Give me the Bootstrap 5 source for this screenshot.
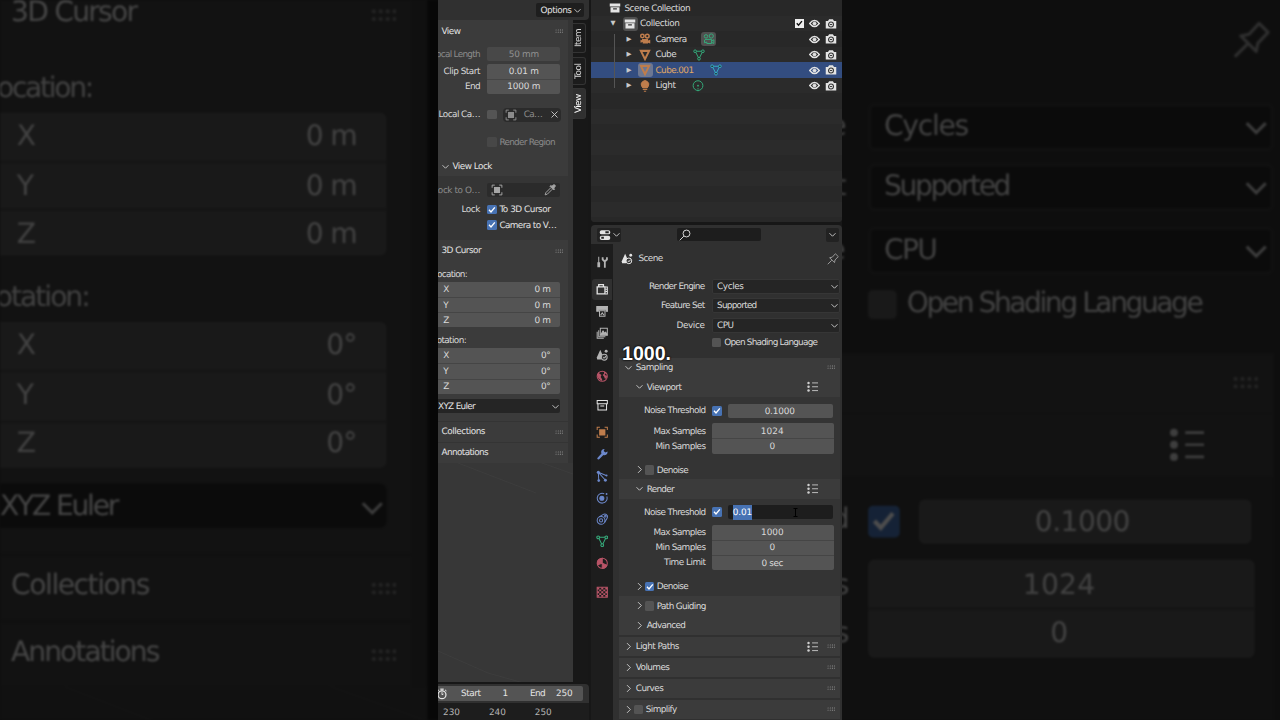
<!DOCTYPE html>
<html lang="en">
<head>
<meta charset="utf-8">
<meta name="viewport" content="width=device-width, initial-scale=1">
<title>Scene properties</title>
<link href="https://cdn.jsdelivr.net/npm/bootstrap@5.3.0/dist/css/bootstrap.min.css" rel="stylesheet">
<style>
html,body{height:100%;margin:0;background:#0e0e0e;overflow:hidden}
body{font-family:"DejaVu Sans",sans-serif;font-size:8.9px;line-height:1;color:#dadada;text-rendering:geometricPrecision}
.stage{width:1280px;height:720px}
.backdrop{inset:0;filter:blur(.9px) brightness(.3)}
.backdrop .phone{position:absolute;left:0;top:0;transform-origin:0 360px;transform:scale(3.1683)}
.phone{width:404px;height:720px;background:#171717;flex:none}
.front{z-index:1}
.t{display:inline-block;white-space:pre;line-height:14px;padding-top:1.3px}
.t,.i{flex:none}
.i{width:12px;height:12px;display:block;fill:none;stroke:currentColor;stroke-width:1.3}
.dim{color:#8b8b8b}
.h14{height:14px}.h15{height:15.25px}.h19{height:19.5px}
.s1{margin-top:1.5px}.s2{margin-top:2.5px}.s5{margin-top:5.5px}.s6{margin-top:6px}.s13{margin-top:13.5px}

/* left editor */
.leftcol{width:150.5px}
.v-head{height:19.5px;background:#303030;border-radius:0 0 4px 0;padding:3px 5px 0 0}
.opt{background:#1e1e1e;border-radius:2px;width:48px;height:14px;padding:0 2px 0 5px}
.side{width:135px;background:#343434}
.viewport-rest{background:#373737}
.pnl{width:129.5px;background:#3b3b3b}
.pnl-h{padding-left:3.5px}
.lock{background:#353535;width:129.5px;height:64px}
.lab{width:42px;flex:none}
.fld{background:#545454;border-radius:2px;width:73px;margin-left:7.3px;flex:none}
.fld.off{background:#484848;color:#929292}
.stk{width:73px;margin-left:7.3px;border-radius:2px;overflow:hidden;background:#545454}
.stk>div+div,.xyz>div+div,.f2>div+div{border-top:1px solid #454545}
.stk>div+div>.t,.xyz>div+div>.t,.f2>div+div>.t{margin-top:-.6px}
.darkf,.fld.darkf{background:#2b2b2b;color:#a5a5a5}
.darkf.dim{color:#8b8b8b}
.chk{width:9.6px;height:9.6px;background:#545454;border-radius:1.5px;flex:none}
.chk.on{background:#4772b3;color:#fff}
.chk .i{width:9.6px;height:9.6px;stroke-width:1.7}
.chk.ms-2{margin-left:7px!important}
.xyz{width:122px;background:#545454;border-radius:0 2px 2px 0;overflow:hidden}
.xyz>div{padding:0 9.5px 0 5.3px}
.euler{width:122px;background:#252525;border-radius:0 2px 2px 0}
.dots{width:8px;height:4px;flex:none;background:radial-gradient(circle at 1px 1px,#7c7c7c .55px,transparent .7px) 0 0/2.2px 2.4px;position:relative;left:-1px}
.tabsv{width:15px;background:#181818;padding-top:3px}
.vt{width:13px;border:1px solid #343434;border-right:0;writing-mode:vertical-rl;transform:rotate(180deg);border-radius:3px 0 0 3px;background:#1c1c1c}
.vt .t{line-height:11px;padding:0}
.vt.act{background:#303030;color:#fff}
.vi{height:30px}.vo{height:28px;margin-top:4px}.vw{height:31px;margin-top:3.5px}
#focal{margin-top:8px}
.camf{margin-left:6px;margin-right:7px;padding:0 2px}
.rtx{margin-left:2.8px}.rt2{margin-left:2.3px}
.vlk{margin-top:7.5px;padding-left:3px}.vlk .t{margin-left:2.5px}
.lk1{padding-top:6.5px;height:20.5px}
.cursorp{padding-top:.8px;height:180.5px}
.cut1{margin-left:-5px}.cut2{margin-left:-6.5px}
.tl{height:36px;margin-top:2.5px;background:#303030;border-radius:0 4px 0 0}
.tl-f{height:15px;width:145px;margin-top:2px;background:#545454;border-radius:0 2px 2px 0}
.tl-r{background:#1d1d1d;height:17px;margin-top:2px;padding-top:1.3px;color:#b5b5b5}
.wt{margin-left:-2px}.g1{margin-left:13px}.g2{margin-left:22px;width:5px}.g3{margin-left:22.5px}.g4{margin-left:11px}
.r1{margin-left:5px}.r2{margin-left:28.9px}

/* outliner */
.rightcol{width:250.5px;margin-left:2.5px}
.outl{height:222px;background:#282828;border-radius:0 0 4px 4px;padding-top:.3px}
.orow{height:15.5px;background:#282828;flex:none}
.orow:nth-child(even){background:#2b2b2b}
.orow.sel{background:#334d80}
.orow.sel .nm{color:#e0a864}
.stripe{flex:1;background:repeating-linear-gradient(#282828 0 15.5px,#2b2b2b 15.5px 31px)}
.or{color:#bf7d4c}.gr{color:#35ac7b}.cy{color:#35b0c6}.wh{color:#e4e4e4}
.bub{background:#505050;border-radius:3px;width:15px;height:14px}
.tri{font-size:6.5px;color:#c9c9c9}
.guide{left:22.5px;top:34px;width:1px;height:54px;background:#555}
.o0{padding-left:17.5px}.o0 .nm{margin-left:4px}
.o1{padding-left:19.5px}.o1 .tri{width:12px}.o1 .nm{margin-left:2.5px}
.o2{padding-left:35.5px}.o2 .tri{width:12.5px}.o2 .nm{margin-left:4.5px}
.b2{margin-left:15px}.d2{margin-left:16.5px}
.selb{margin:0 -1.5px;background:#6d7791}
.ey{width:11px;height:11px;margin-right:4.5px}.cm{margin-right:5px}
.ckb{width:8.5px;height:8.5px;background:#eee;color:#111;margin-right:5.5px}.ckb .i{width:8.5px;height:8.5px;stroke-width:2}

/* properties */
.props{margin-top:3px;background:#303030;border-radius:4px 4px 0 0;flex:1;min-height:0}
.p-head{height:19px;padding:0 3px 0 6px}
.ed{background:#222;border-radius:2px;width:24px;height:14px}
.srch{background:#1d1d1d;border-radius:2px;width:84px;height:13.5px;margin-left:55.5px;padding-left:2.5px}
.pi{margin-left:2px}.sm2{width:13px}
.ptabs{width:21.5px;background:#1d1d1d;color:#b3b3b3;padding-top:7px}
.pt{height:21.75px;width:20px;margin-left:1.2px;border-radius:3px 0 0 3px;flex:none}
.pt .i{width:12.5px;height:12.5px}
.pt.act{background:#303030;height:20.5px;margin-top:6.5px;margin-bottom:.8px;color:#e4e4e4}
.pt.far{margin-top:7px}
.pt.near{margin-top:5.5px}
.blu{color:#6c88cb}.pk{color:#b85467}
.pbody{width:229px}
.sel-f{background:#252525;border:1px solid #363636;border-radius:2px;width:128.5px;height:15px;margin-left:7px;padding-left:4.5px;flex:none}
.plab{width:92px;flex:none}
.card2{margin-left:6.3px;width:221.7px;flex:none}
.hd{background:#3b3b3b;height:19.5px}
.in{background:#343434}
.lab2{width:86.7px;flex:none}
.f2{margin-left:6.8px;width:121.5px;background:#545454;border-radius:2px;overflow:hidden;flex:none;padding-right:1.5px}
.f2>div{margin-right:-1.5px;padding-right:1.5px}
.f3{width:105.5px;margin-left:6px;padding-right:2px;background:#545454;border-radius:2px;flex:none}
.f3.ed-on{background:#1d1d1d;color:#fff;padding-left:4.8px}
.hl{background:#4772b3}
.cvs{width:9px;height:9px;stroke-width:1.25;color:#c9c9c9}
.cvs.cv{width:9px;margin-left:5px;margin-right:1px}.cvs.l2{margin-left:16px}
.ibeam{width:5px;height:9px;left:174px;color:#000}
.crumb{margin-top:6.5px;padding-left:8px;height:16px}.crumb .t{margin-left:6px}.pn{margin-right:3px;color:#9a9a9a}
.eng{margin-top:12.3px;height:15px}.fea{margin-top:4.5px;height:15px}
.osl{padding-left:99.3px;margin-top:2px}
.sampling{margin-top:7.7px}
.tx{margin-left:2px}
.ls{width:11.5px;height:11.5px;margin-right:21.5px;color:#cfcfcf}.l3{margin-right:9.5px}
.vbody{height:82.5px;padding-top:7px}
.rbody{height:97.5px;padding-top:6.3px}
.nc{margin-left:6.8px}
.dn{height:19px;margin-top:6.7px}
.caption{left:184px;top:344px;font:bold 19.6px/21px "Liberation Sans",sans-serif;color:#fff;text-shadow:0 0 2px #000,0 0 2px #000;z-index:2}
</style>
</head>
<body>
<svg width="0" height="0" class="position-absolute">
 <symbol id="down" viewBox="0 0 12 12"><path d="M2 4.300 6 8.300l4-4"/></symbol>
 <symbol id="right" viewBox="0 0 12 12"><path d="M4 1.500 8.500 6 4 10.500"/></symbol>
 <symbol id="tick" viewBox="0 0 12 12"><path d="m2.500 6 2.500 2.700 4.800-5.700"/></symbol>
 <symbol id="cross" viewBox="0 0 12 12"><path d="m2 2 8 8M10 2l-8 8"/></symbol>
 <symbol id="obj" viewBox="0 0 16 16"><path d="M1.500 5V1.500H5M11 1.500h3.500V5M14.500 11v3.500H11M5 14.500H1.500V11"/><path d="M4 4h8v8H4z" fill="currentColor" stroke="none"/></symbol>
 <symbol id="drop" viewBox="0 0 16 16"><path d="M9 5 2.500 11.500 1.500 14.500l3-1L11 7"/><path d="m8 3 5 5 1-1-1-1.500 2-2.500q.5-2-2-2L10.500 3 9 2z" fill="currentColor"/></symbol>
 <symbol id="box" viewBox="0 0 16 16"><path d="M1 2h14v4H1zM2 7h12v7H2z" fill="currentColor" stroke="none"/><path d="M5.500 9.300h5" stroke="#333" stroke-width="1.700"/></symbol>
 <symbol id="boxo" viewBox="0 0 16 16"><path d="M1.500 2h13v4h-13zM2.500 6v8h11V6M5.500 9h5"/></symbol>
 <symbol id="movie" viewBox="0 0 16 16"><circle cx="4.500" cy="4" r="2.300" stroke-width="2"/><circle cx="11" cy="4" r="2.500" stroke-width="2"/><path d="M4 8h8v6H5v-2l-3 1V9l2 .5zM12 10l3-1v5l-3-1z" fill="currentColor" stroke="none"/></symbol>
 <symbol id="movieo" viewBox="0 0 16 16"><circle cx="4" cy="4.500" r="2.300"/><circle cx="11" cy="4" r="2.800"/><path d="M4 8.500h7.500v5.500H5v-2l-3 1V9.500zM11.500 10.500l3-1.500v5l-3-1.500"/></symbol>
 <symbol id="tri" viewBox="0 0 16 16"><path d="M2.500 2.500h11L8 13.500z" stroke-width="2.700"/></symbol>
 <symbol id="mesh" viewBox="0 0 16 16"><path d="M3 3h10L8 13z"/><g fill="#252b29"><circle cx="2.800" cy="3" r="1.800"/><circle cx="13.200" cy="3" r="1.800"/><circle cx="8" cy="13" r="1.800"/></g></symbol>
 <symbol id="bulb" viewBox="0 0 16 16"><path d="M5 10.500 3.700 8.500a5 5 0 1 1 8.600 0L11 10.500z" fill="currentColor"/><path d="M5 12.700h6M6.500 15h3"/></symbol>
 <symbol id="lamp" viewBox="0 0 16 16"><circle cx="8" cy="7.500" r="6.500"/><circle cx="8" cy="7.500" r="1.200" fill="currentColor" stroke="none"/><path d="M8 11v4.500" stroke-dasharray="1.500 1"/></symbol>
 <symbol id="eye" viewBox="0 0 16 16"><path d="M1 8q7-9 14 0-7 9-14 0z" stroke-width="1.900"/><circle cx="8" cy="8" r="2.300" fill="currentColor"/></symbol>
 <symbol id="cam" viewBox="0 0 16 16"><path d="M1 4h3l1.500-2.500h5L12 4h3v10H1z" fill="currentColor" stroke="none"/><circle cx="8" cy="8.700" r="3.300" stroke="#333" stroke-width="1.400"/><path d="M6.500 8.700h3" stroke="#333"/></symbol>
 <symbol id="tools" viewBox="0 0 16 16"><path d="M3.500 1v8"/><path d="M3.500 8v6.500" stroke-width="3.500"/><path d="M8.500 1.500v3l2.700 2.500L14 4.500v-3M11.300 7v8" stroke-width="2.300"/></symbol>
 <symbol id="render" viewBox="0 0 16 16"><path d="M1.500 5h10v9h-10zM3.500 5V2h6v3" stroke-width="1.700"/><path d="M12 5h2.500v9H12M14 8h-2M14 11h-2"/></symbol>
 <symbol id="print" viewBox="0 0 16 16"><path d="M1 2h14v6h-2V6H3v2H1z" fill="currentColor"/><path d="M4.500 7.500h7v7h-7zM6 13l2-3 2 3"/></symbol>
 <symbol id="imgs" viewBox="0 0 16 16"><path d="M1.500 6v8.500H10M3.500 4v8.500H12"/><path d="M5.500 1.500h9v9h-9z"/><path d="m6 10 3-5 2 3 1.500-1.500L14 10z" fill="currentColor"/></symbol>
 <symbol id="scene" viewBox="0 0 16 16"><path d="M5.500 1 9 9l-2 4.500H1.500L1 11z" fill="currentColor" stroke="none"/><circle cx="10.500" cy="10.500" r="3.800" fill="#333"/><path d="M9 11q3 1 3.500-2"/><circle cx="13" cy="3" r="1.900" fill="currentColor" stroke="none"/></symbol>
 <symbol id="world" viewBox="0 0 16 16"><circle cx="8" cy="8" r="6.500"/><path d="M3 3.500 7 6.500l-1 2.500 2 3-1 2-4-3.500L1.500 7zM10 2l3 1.500-2 3 3 1v2l-2.500 2-1-3-2-2 2-2z" fill="currentColor" stroke="none"/></symbol>
 <symbol id="wrench" viewBox="0 0 16 16"><path d="M14.700 4.500a4 4 0 0 1-5.200 4.500L4 14.500q-2 .5-2.500-1.500L7 7a4 4 0 0 1 4-5.700L9.800 3.800l2.200 2z" fill="currentColor" stroke="none"/></symbol>
 <symbol id="part" viewBox="0 0 16 16"><path d="m3 3 .5 10M3 3l10 4M3 3l8.500 9.500"/><g fill="currentColor" stroke="none"><circle cx="3" cy="3" r="2"/><circle cx="3.500" cy="13.500" r="1.700"/><circle cx="13.500" cy="7" r="1.300"/><circle cx="12" cy="13" r="1.900"/></g></symbol>
 <symbol id="phys" viewBox="0 0 16 16"><path d="M10.500 2.200a6.300 6.300 0 1 0 3.300 3.500"/><circle cx="7.500" cy="8" r="2.600" fill="currentColor"/><circle cx="13.500" cy="2.500" r="1.200" fill="currentColor" stroke="none"/></symbol>
 <symbol id="cons" viewBox="0 0 16 16"><circle cx="6.500" cy="9.500" r="5"/><circle cx="6.500" cy="9.500" r="2"/><path d="M4 5 10 1.500q3-1 4.500 2 .5 2-.5 3.500L11 12"/><circle cx="12" cy="4" r="1"/></symbol>
 <symbol id="mat" viewBox="0 0 16 16"><circle cx="8" cy="8" r="6.500"/><path d="M8 8V1.500A6.500 6.500 0 0 0 2 10zM8 8l6 2.500A6.500 6.500 0 0 1 8 14.500z" fill="currentColor"/></symbol>
 <symbol id="tex" viewBox="0 0 16 16"><path d="M1.500 1.500h13v13h-13z"/><path d="M1.500 3.200h13M1.500 8h13M1.500 12.700h13" stroke-width="2.400" stroke-dasharray="2.600 2.600"/><path d="M4.100 5.600h11M4.100 10.400h11" stroke-width="2.400" stroke-dasharray="2.600 2.600"/></symbol>
 <symbol id="pin" viewBox="0 0 16 16"><path d="m1 15 5.300-5.300M3.500 6.300l6.500 6.500.7-3.500L15 4.800 11.200 1 7 5.600z" stroke-linejoin="round"/></symbol>
 <symbol id="find" viewBox="0 0 16 16"><circle cx="10" cy="6" r="4.600"/><path d="M6.500 9.500 1 15"/></symbol>
 <symbol id="propsi" viewBox="0 0 16 16"><rect x="1" y="1.500" width="14" height="5.500" rx="2.500" fill="currentColor" stroke="none"/><rect x="1" y="9" width="14" height="5.500" rx="2.500" fill="currentColor" stroke="none"/><path d="M8.500 4.300H13M3 11.700h3.500" stroke="#222" stroke-width="2.600"/></symbol>
 <symbol id="list" viewBox="0 0 12 12"><g fill="currentColor" stroke="none"><circle cx="1.600" cy="2" r="1.300"/><circle cx="1.600" cy="6" r="1.300"/><circle cx="1.600" cy="10" r="1.300"/></g><path d="M5.300 2h6.200M5.300 6h6.200M5.300 10h6.200" stroke-width=".9"/></symbol>
 <symbol id="watch" viewBox="0 0 16 16"><circle cx="8" cy="9" r="5.300" stroke-width="1.700"/><path d="M8 9V5.500M8 9l2-1M5.500 1.500h5M8 1v3M2 4l2-1.500M14 4l-2-1.500"/></symbol>
 <symbol id="beam" viewBox="0 0 5 9"><path d="M.5.5h4M2.500.5v8M.5 8.500h4" stroke-width="1"/></symbol>
</svg>

<div class="stage position-relative overflow-hidden d-flex justify-content-center">
 <div class="backdrop position-absolute overflow-hidden" aria-hidden="true"></div>
 <!-- the centre column is 404px wide and sits 438px from the left -->
 <main class="phone front position-relative overflow-hidden d-flex">

  <section class="leftcol d-flex flex-column flex-shrink-0">
   <div class="v-head d-flex justify-content-end"><div class="opt d-flex align-items-center justify-content-between"><span class="t wh" data-w="31">Options</span><svg class="i cvs"><use href="#down"/></svg></div></div>
   <div class="d-flex flex-grow-1">
    <div class="side overflow-hidden d-flex flex-column">
     <div class="pnl">
      <div class="pnl-h d-flex align-items-center justify-content-between h19 pe-1 pt-1"><span class="t wh" data-w="19">View</span><span class="dots"></span></div>
      <div class="d-flex h14" id="focal"><div class="lab d-flex justify-content-end dim"><span class="t" data-w="48">Focal Length</span></div><div class="fld off text-center"><span class="t" data-w="30">50 mm</span></div></div>
      <div class="d-flex s2"><div class="lab d-flex flex-column align-items-end"><div class="h15"><span class="t" data-w="36.500">Clip Start</span></div><div class="h15"><span class="t" data-w="15">End</span></div></div><div class="stk text-center"><div class="h15"><span class="t" data-w="30">0.01 m</span></div><div class="h15"><span class="t" data-w="33">1000 m</span></div></div></div>
      <div class="d-flex align-items-center h14 s13"><div class="lab d-flex justify-content-end"><span class="t" data-w="41.500">Local Ca…</span></div><span class="chk ms-2"></span><div class="darkf dim d-flex align-items-center justify-content-between flex-grow-1 h14 rounded-1 camf"><svg class="i"><use href="#obj"/></svg><span class="t" data-w="18.500">Ca…</span><svg class="i cvs"><use href="#cross"/></svg></div></div>
      <div class="d-flex align-items-center h14 s13 dim"><span class="lab"></span><span class="chk ms-2 opacity-50"></span><span class="t rtx" data-w="55.500">Render Region</span></div>
      <div class="d-flex align-items-center h19 vlk"><svg class="i cvs"><use href="#down"/></svg><span class="t wh" data-w="39.500">View Lock</span></div>
     </div>
     <div class="lock">
      <div class="d-flex lk1"><div class="lab d-flex justify-content-end dim"><span class="t" data-w="46.500">Lock to O…</span></div><div class="fld darkf d-flex align-items-center justify-content-between px-1"><svg class="i"><use href="#obj"/></svg><svg class="i"><use href="#drop"/></svg></div></div>
      <div class="d-flex align-items-center h15 s5"><div class="lab d-flex justify-content-end"><span class="t" data-w="18.500">Lock</span></div><span class="chk on ms-2"><svg class="i"><use href="#tick"/></svg></span><span class="t rtx wh" data-w="51">To 3D Cursor</span></div>
      <div class="d-flex align-items-center h15"><span class="lab"></span><span class="chk on ms-2"><svg class="i"><use href="#tick"/></svg></span><span class="t rtx wh" data-w="57">Camera to V…</span></div>
     </div>
     <div class="pnl cursorp">
      <div class="pnl-h d-flex align-items-center justify-content-between h19 pe-1"><span class="t wh" data-w="39.500">3D Cursor</span><span class="dots"></span></div>
      <div class="cut1 h15 s6"><span class="t" data-w="34">Location:</span></div>
      <div class="xyz"><div class="h15 d-flex justify-content-between"><span class="t">X</span><span class="t" data-w="16">0 m</span></div><div class="h15 d-flex justify-content-between"><span class="t">Y</span><span class="t" data-w="16">0 m</span></div><div class="h15 d-flex justify-content-between"><span class="t">Z</span><span class="t" data-w="16">0 m</span></div></div>
      <div class="cut2 h15 s5"><span class="t" data-w="34.500">Rotation:</span></div>
      <div class="xyz"><div class="h15 d-flex justify-content-between"><span class="t">X</span><span class="t" data-w="9.500">0°</span></div><div class="h15 d-flex justify-content-between"><span class="t">Y</span><span class="t" data-w="9.500">0°</span></div><div class="h15 d-flex justify-content-between"><span class="t">Z</span><span class="t" data-w="9.500">0°</span></div></div>
      <div class="euler h14 d-flex align-items-center justify-content-between s5"><span class="t wh" data-w="37">XYZ Euler</span><svg class="i cvs"><use href="#down"/></svg></div>
     </div>
     <div class="pnl pnl-h d-flex align-items-center justify-content-between h19 pe-1 s1"><span class="t wh" data-w="43.500">Collections</span><span class="dots"></span></div>
     <div class="pnl pnl-h d-flex align-items-center justify-content-between h19 pe-1 s1"><span class="t wh" data-w="46.500">Annotations</span><span class="dots"></span></div>
     <svg class="viewport-rest flex-grow-1 d-block" width="135" height="217" fill="none" stroke="#3d3d3d"><path d="m0 188 50 22 50 14M90-5l45 16M20 0 98 30"/></svg>
    </div>
    <div class="tabsv">
     <div class="vt d-flex align-items-center justify-content-center vi"><span class="t" data-w="18">Item</span></div>
     <div class="vt d-flex align-items-center justify-content-center vo"><span class="t" data-w="15.500">Tool</span></div>
     <div class="vt act d-flex align-items-center justify-content-center vw"><span class="t" data-w="18.500">View</span></div>
    </div>
   </div>
   <div class="tl">
    <div class="tl-f d-flex align-items-center wh"><svg class="i wt"><use href="#watch"/></svg><span class="t g1" data-w="19.500">Start</span><span class="t g2">1</span><span class="t g3" data-w="15">End</span><span class="t g4" data-w="16.500">250</span></div>
    <div class="tl-r d-flex"><span class="t r1" data-w="17">230</span><span class="t r2" data-w="17">240</span><span class="t r2" data-w="17">250</span></div>
   </div>
  </section>

  <section class="rightcol d-flex flex-column flex-shrink-0">
   <div class="outl d-flex flex-column position-relative overflow-hidden">
    <div class="orow d-flex align-items-center o0"><svg class="i wh"><use href="#box"/></svg><span class="t nm" data-w="65.500">Scene Collection</span></div>
    <div class="orow d-flex align-items-center o1"><span class="tri">▼</span><span class="bub wh d-flex align-items-center justify-content-center"><svg class="i"><use href="#box"/></svg></span><span class="t nm" data-w="39.500">Collection</span><span class="ckb ms-auto"><svg class="i"><use href="#tick"/></svg></span><svg class="i wh ey"><use href="#eye"/></svg><svg class="i wh cm"><use href="#cam"/></svg></div>
    <div class="orow d-flex align-items-center o2"><span class="tri">▶</span><svg class="i or"><use href="#movie"/></svg><span class="t nm" data-w="31">Camera</span><span class="bub gr d-flex align-items-center justify-content-center b2"><svg class="i"><use href="#movieo"/></svg></span><svg class="i wh ey ms-auto"><use href="#eye"/></svg><svg class="i wh cm"><use href="#cam"/></svg></div>
    <div class="orow d-flex align-items-center o2"><span class="tri">▶</span><svg class="i or"><use href="#tri"/></svg><span class="t nm" data-w="20.500">Cube</span><svg class="i gr d2"><use href="#mesh"/></svg><svg class="i wh ey ms-auto"><use href="#eye"/></svg><svg class="i wh cm"><use href="#cam"/></svg></div>
    <div class="orow sel d-flex align-items-center o2"><span class="tri">▶</span><span class="bub selb or d-flex align-items-center justify-content-center"><svg class="i"><use href="#tri"/></svg></span><span class="t nm" data-w="38">Cube.001</span><svg class="i cy d2"><use href="#mesh"/></svg><svg class="i wh ey ms-auto"><use href="#eye"/></svg><svg class="i wh cm"><use href="#cam"/></svg></div>
    <div class="orow d-flex align-items-center o2"><span class="tri">▶</span><svg class="i or"><use href="#bulb"/></svg><span class="t nm" data-w="20">Light</span><svg class="i gr d2"><use href="#lamp"/></svg><svg class="i wh ey ms-auto"><use href="#eye"/></svg><svg class="i wh cm"><use href="#cam"/></svg></div>
    <div class="stripe"></div>
    <div class="guide position-absolute"></div>
   </div>
   <div class="props d-flex flex-column overflow-hidden">
    <div class="p-head d-flex align-items-center">
     <div class="ed d-flex align-items-center justify-content-between wh"><svg class="i pi"><use href="#propsi"/></svg><svg class="i cvs"><use href="#down"/></svg></div>
     <div class="srch d-flex align-items-center"><svg class="i"><use href="#find"/></svg></div>
     <div class="ed sm2 d-flex align-items-center justify-content-center ms-auto"><svg class="i cvs"><use href="#down"/></svg></div>
    </div>
    <div class="d-flex flex-grow-1">
     <nav class="ptabs d-flex flex-column flex-shrink-0">
      <div class="pt d-flex align-items-center justify-content-center"><svg class="i"><use href="#tools"/></svg></div>
      <div class="pt act d-flex align-items-center justify-content-center"><svg class="i"><use href="#render"/></svg></div>
      <div class="pt d-flex align-items-center justify-content-center"><svg class="i"><use href="#print"/></svg></div>
      <div class="pt d-flex align-items-center justify-content-center"><svg class="i"><use href="#imgs"/></svg></div>
      <div class="pt d-flex align-items-center justify-content-center"><svg class="i"><use href="#scene"/></svg></div>
      <div class="pt d-flex align-items-center justify-content-center pk"><svg class="i"><use href="#world"/></svg></div>
      <div class="pt far d-flex align-items-center justify-content-center wh"><svg class="i"><use href="#boxo"/></svg></div>
      <div class="pt near d-flex align-items-center justify-content-center or"><svg class="i"><use href="#obj"/></svg></div>
      <div class="pt d-flex align-items-center justify-content-center blu"><svg class="i"><use href="#wrench"/></svg></div>
      <div class="pt d-flex align-items-center justify-content-center blu"><svg class="i"><use href="#part"/></svg></div>
      <div class="pt d-flex align-items-center justify-content-center blu"><svg class="i"><use href="#phys"/></svg></div>
      <div class="pt d-flex align-items-center justify-content-center blu"><svg class="i"><use href="#cons"/></svg></div>
      <div class="pt d-flex align-items-center justify-content-center gr"><svg class="i"><use href="#mesh"/></svg></div>
      <div class="pt d-flex align-items-center justify-content-center pk"><svg class="i"><use href="#mat"/></svg></div>
      <div class="pt far d-flex align-items-center justify-content-center pk"><svg class="i"><use href="#tex"/></svg></div>
     </nav>
     <div class="pbody d-flex flex-column">
      <div class="d-flex align-items-center crumb"><svg class="i wh"><use href="#scene"/></svg><span class="t" data-w="24">Scene</span><svg class="i ms-auto pn"><use href="#pin"/></svg></div>
      <div class="d-flex align-items-center eng"><div class="plab d-flex justify-content-end"><span class="t" data-w="55.500">Render Engine</span></div><div class="sel-f d-flex align-items-center justify-content-between"><span class="t" data-w="26.500">Cycles</span><svg class="i cvs"><use href="#down"/></svg></div></div>
      <div class="d-flex align-items-center fea"><div class="plab d-flex justify-content-end"><span class="t" data-w="43.500">Feature Set</span></div><div class="sel-f d-flex align-items-center justify-content-between"><span class="t" data-w="39.500">Supported</span><svg class="i cvs"><use href="#down"/></svg></div></div>
      <div class="d-flex align-items-center fea"><div class="plab d-flex justify-content-end"><span class="t" data-w="28">Device</span></div><div class="sel-f d-flex align-items-center justify-content-between"><span class="t" data-w="16.500">CPU</span><svg class="i cvs"><use href="#down"/></svg></div></div>
      <div class="d-flex align-items-center h15 osl"><span class="chk"></span><span class="t rtx" data-w="93">Open Shading Language</span></div>

      <div class="card2 sampling">
       <div class="hd d-flex align-items-center"><svg class="i cvs cv"><use href="#down"/></svg><span class="t tx" data-w="37">Sampling</span><span class="dots ms-auto me-1"></span></div>
       <div class="hd d-flex align-items-center"><svg class="i cvs cv l2"><use href="#down"/></svg><span class="t tx" data-w="34.500">Viewport</span><svg class="i ms-auto ls"><use href="#list"/></svg></div>
       <div class="in vbody">
        <div class="d-flex align-items-center h14"><div class="lab2 d-flex justify-content-end"><span class="t" data-w="61.500">Noise Threshold</span></div><span class="chk on nc"><svg class="i"><use href="#tick"/></svg></span><div class="f3 text-center h14"><span class="t" data-w="30">0.1000</span></div></div>
        <div class="d-flex s5"><div class="lab2 d-flex flex-column align-items-end"><div class="h15"><span class="t" data-w="52">Max Samples</span></div><div class="h15"><span class="t" data-w="50">Min Samples</span></div></div><div class="f2 text-center"><div class="h15"><span class="t" data-w="23">1024</span></div><div class="h15"><span class="t">0</span></div></div></div>
        <div class="d-flex align-items-center dn"><svg class="i cvs cv l2"><use href="#right"/></svg><span class="chk"></span><span class="t rt2" data-w="31.500">Denoise</span></div>
       </div>
       <div class="hd d-flex align-items-center"><svg class="i cvs cv l2"><use href="#down"/></svg><span class="t tx" data-w="27">Render</span><svg class="i ms-auto ls"><use href="#list"/></svg></div>
       <div class="in rbody">
        <div class="d-flex align-items-center h14 position-relative"><div class="lab2 d-flex justify-content-end"><span class="t" data-w="61.500">Noise Threshold</span></div><span class="chk on nc"><svg class="i"><use href="#tick"/></svg></span><div class="f3 ed-on h14"><span class="t hl" data-w="19.500">0.01</span></div><svg class="i ibeam position-absolute"><use href="#beam"/></svg></div>
        <div class="d-flex s5"><div class="lab2 d-flex flex-column align-items-end"><div class="h15"><span class="t" data-w="52">Max Samples</span></div><div class="h15"><span class="t" data-w="50">Min Samples</span></div><div class="h15"><span class="t" data-w="41.500">Time Limit</span></div></div><div class="f2 text-center"><div class="h15"><span class="t" data-w="22.500">1000</span></div><div class="h15"><span class="t">0</span></div><div class="h15"><span class="t" data-w="21.500">0 sec</span></div></div></div>
        <div class="d-flex align-items-center dn"><svg class="i cvs cv l2"><use href="#right"/></svg><span class="chk on"><svg class="i"><use href="#tick"/></svg></span><span class="t rt2" data-w="31.500">Denoise</span></div>
       </div>
       <div class="hd d-flex align-items-center"><svg class="i cvs cv l2"><use href="#right"/></svg><span class="chk"></span><span class="t rt2" data-w="49">Path Guiding</span></div>
       <div class="hd d-flex align-items-center"><svg class="i cvs cv l2"><use href="#right"/></svg><span class="t tx" data-w="38.500">Advanced</span></div>
      </div>
      <div class="card2 hd s1 d-flex align-items-center"><svg class="i cvs cv"><use href="#right"/></svg><span class="t tx" data-w="43">Light Paths</span><svg class="i ms-auto ls l3"><use href="#list"/></svg><span class="dots me-1"></span></div>
      <div class="card2 hd s1 d-flex align-items-center"><svg class="i cvs cv"><use href="#right"/></svg><span class="t tx" data-w="33.500">Volumes</span><span class="dots ms-auto me-1"></span></div>
      <div class="card2 hd s1 d-flex align-items-center"><svg class="i cvs cv"><use href="#right"/></svg><span class="t tx" data-w="27.500">Curves</span><span class="dots ms-auto me-1"></span></div>
      <div class="card2 hd s1 d-flex align-items-center"><svg class="i cvs cv"><use href="#right"/></svg><span class="chk"></span><span class="t rt2" data-w="31">Simplify</span><span class="dots ms-auto me-1"></span></div>
     </div>
    </div>
   </div>
  </section>
  <div class="caption position-absolute">1000.</div>
 </main>
</div>
<script src="https://cdn.jsdelivr.net/npm/bootstrap@5.3.0/dist/js/bootstrap.bundle.min.js"></script>
<script>
// Tighten each label to its measured width.
const front = document.querySelector('.front');
front.querySelectorAll('[data-w]').forEach(el => {
  const r = el.getBoundingClientRect();
  const natural = el.closest('.vt') ? r.height : r.width;
  el.style.letterSpacing = ((+el.dataset.w - natural) / el.textContent.length).toFixed(3) + 'px';
});
// Enlarged, dimmed copy of the column behind it; parts that fall out of sight are dropped.
const back = front.cloneNode(true);
back.classList.remove('front', 'position-relative');
const spacer = document.createElement('div');
spacer.style.height = front.querySelector('.pnl').getBoundingClientRect().height + 'px';
spacer.style.flex = 'none';
back.querySelector('.pnl').replaceWith(spacer);
back.querySelectorAll('[id]').forEach(e => e.removeAttribute('id'));
back.querySelector('.caption').remove();
document.querySelector('.backdrop').append(back);
back.querySelectorAll('.t, .i').forEach(el => {
  const r = el.getBoundingClientRect();
  if (r.bottom < 0 || r.top > 720 || r.left > 1280 || (r.left >= 438 && r.right <= 842)) {
    el.style.visibility = 'hidden';
    if (el.matches('.t')) { el.style.width = r.width / 3.1683 + 'px'; el.style.height = '14px'; el.textContent = ''; }
  }
});
</script>
</body>
</html>
